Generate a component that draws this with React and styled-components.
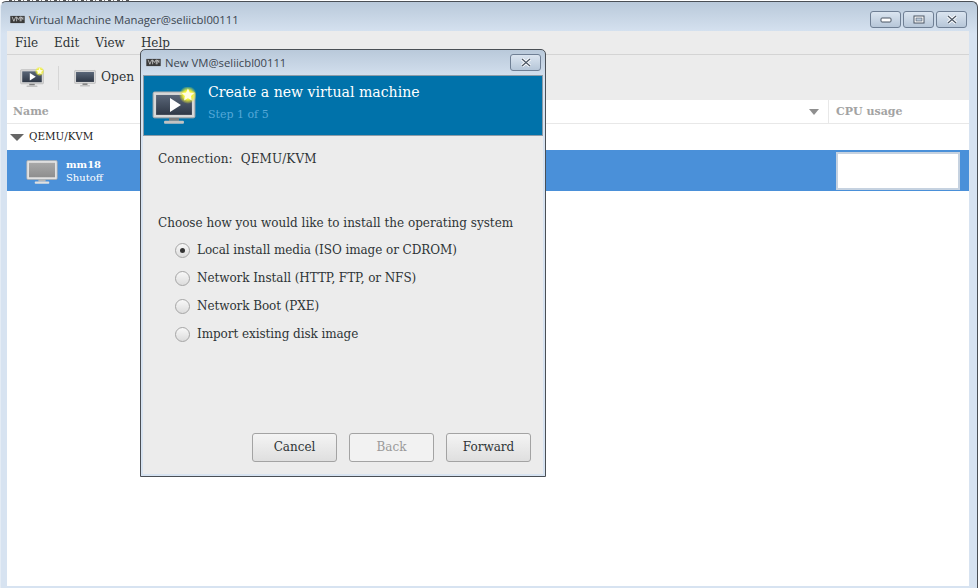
import React from "react";
import styled, { createGlobalStyle } from "styled-components";

const Global = createGlobalStyle`
  html, body { margin: 0; padding: 0; background: #fff; }
  body { width: 980px; height: 588px; overflow: hidden; font-family: "DejaVu Serif", serif; font-size: 12px; color: #2e3436; }
`;

const Desktop = styled.div`
  position: relative;
  width: 980px;
  height: 588px;
  padding: 1px 0 0 0;
  box-sizing: border-box;
  overflow: hidden;
`;

// bits of some other window peeking out above the frame
const Remnant = styled.div`
  position: absolute;
  left: 9px;
  top: 0;
  width: 120px;
  height: 1px;
  background: repeating-linear-gradient(90deg, #555 0 3px, transparent 3px 5px, #777 5px 6px, transparent 6px 9px);
`;

const Frame = styled.div`
  width: 978px;
  height: 587px;
  box-sizing: border-box;
  display: flex;
  flex-direction: column;
  border: 1px solid #4a4f55;
  border-left-color: #e4ecf5;
  border-bottom: 0;
  border-radius: 6px 6px 0 0;
  background: linear-gradient(#b9c9da 0, #d7e3f1 32px);
  padding: 0 8px 2px 6px;
`;

const TitleBar = styled.div`
  height: 29px;
  flex: none;
  box-sizing: border-box;
  display: flex;
  align-items: center;
  font-family: "Open Sans", sans-serif;
  font-size: 11.3px;
  color: #3c4650;
  gap: 4px;
  padding: 6px 0 0 3px;
`;

const TitleText = styled.span`
  flex: 1;
`;

const CaptionGroup = styled.div`
  display: flex;
  gap: 2px;
  margin-right: 2px;
`;

const CaptionBtn = styled.div`
  width: 31px;
  height: 17px;
  box-sizing: border-box;
  border: 1px solid #6f7f94;
  border-radius: 3px;
  background: linear-gradient(#dbe5f0, #b6c6d8);
  display: flex;
  align-items: center;
  justify-content: center;
`;

const Client = styled.div`
  flex: 1;
  display: flex;
  flex-direction: column;
  background: #fff;
`;

const MenuBar = styled.div`
  height: 23px;
  flex: none;
  display: flex;
  align-items: center;
  gap: 16px;
  padding-left: 8px;
  background: #ececec;
  border-bottom: 1px solid #d4d4d4;
  font-size: 12px;
  color: #2e3436;
`;

const Toolbar = styled.div`
  height: 45px;
  flex: none;
  display: flex;
  align-items: center;
  background: #ececec;
  padding-left: 13px;
`;

const ToolSep = styled.div`
  width: 1px;
  height: 24px;
  background: #d6d6d6;
  margin: 0 15px 0 14px;
`;

const ToolLabel = styled.span`
  margin: 0 0 2px 5px;
  font-size: 12.3px;
`;

const HeaderRow = styled.div`
  height: 23px;
  flex: none;
  display: flex;
  align-items: center;
  border-bottom: 1px solid #e8e8e8;
  font-weight: bold;
  color: #a3a3a3;
  font-size: 11px;
`;

const NameCol = styled.div`
  flex: 1;
  padding-left: 6px;
  display: flex;
  align-items: center;
  justify-content: space-between;
  padding-right: 9px;
`;

const CpuCol = styled.div`
  width: 141px;
  height: 100%;
  box-sizing: border-box;
  padding-left: 7px;
  display: flex;
  align-items: center;
  border-left: 1px solid #e8e8e8;
`;

const SortArrow = styled.div`
  width: 0;
  height: 0;
  border-left: 5px solid transparent;
  border-right: 5px solid transparent;
  border-top: 6px solid #8f8f8f;
`;

const GroupRow = styled.div`
  height: 26px;
  flex: none;
  display: flex;
  align-items: center;
  padding-left: 3px;
  gap: 5px;
  font-size: 10.3px;
  color: #222;
`;

const GroupName = styled.span`
  margin-bottom: 2px;
`;

const Expander = styled.div`
  width: 0;
  height: 0;
  border-left: 7px solid transparent;
  border-right: 7px solid transparent;
  border-top: 7px solid #666;
`;

const VmRow = styled.div`
  height: 41px;
  flex: none;
  display: flex;
  align-items: center;
  background: #4a90d9;
  color: #fff;
  padding-left: 19px;
`;

const VmText = styled.div`
  flex: 1;
  margin-left: 8px;
  display: flex;
  flex-direction: column;
  font-size: 10px;
  line-height: 13px;
`;

const VmName = styled.span`
  font-weight: bold;
`;

const CpuGraph = styled.div`
  width: 124px;
  height: 38px;
  box-sizing: border-box;
  margin-right: 9px;
  border: 2px solid #c6d2e0;
  background: #fff;
`;

const Dialog = styled.div`
  position: absolute;
  left: 140px;
  top: 49px;
  width: 406px;
  height: 428px;
  box-sizing: border-box;
  display: flex;
  flex-direction: column;
  border: 1px solid #4a4f55;
  border-radius: 5px 5px 0 0;
  background: linear-gradient(#b9c9da 0, #d7e3f1 30px);
  padding: 0 2px 2px 2px;
`;

const DialogTitle = styled.div`
  height: 25px;
  flex: none;
  display: flex;
  align-items: center;
  gap: 4px;
  padding: 0 2px 0 3px;
  font-family: "Open Sans", sans-serif;
  font-size: 11.3px;
  color: #3c4650;
`;

const DialogBody = styled.div`
  flex: 1;
  display: flex;
  flex-direction: column;
  background: #ececec;
`;

const Banner = styled.div`
  height: 61px;
  flex: none;
  box-sizing: border-box;
  display: flex;
  align-items: center;
  gap: 12px;
  padding-left: 8px;
  background: #0072aa;
  border: 1px solid #8d9ca8;
`;

const BannerText = styled.div`
  display: flex;
  flex-direction: column;
  gap: 8px;
  padding-bottom: 6px;
`;

const BannerTitle = styled.span`
  font-size: 14.1px;
  color: #fff;
`;

const BannerStep = styled.span`
  font-size: 11px;
  color: #55a8d8;
`;

const Content = styled.div`
  flex: 1;
  display: flex;
  flex-direction: column;
  padding: 14px 12px 12px 15px;
`;

const Connection = styled.div`
  height: 18px;
  line-height: 18px;
  letter-spacing: 0.13px;
`;

const Prompt = styled.div`
  margin-top: 46px;
  height: 18px;
  line-height: 18px;
`;

const Options = styled.div`
  display: flex;
  flex-direction: column;
  gap: 10px;
  margin-top: 9px;
  padding-left: 17px;
`;

const Option = styled.div`
  height: 18px;
  display: flex;
  align-items: center;
  gap: 7px;
  letter-spacing: -0.07px;
`;

const Radio = styled.div`
  width: 13px;
  height: 13px;
  border-radius: 50%;
  border: 1px solid #a5a5a5;
  background: linear-gradient(#f8f8f8, #dcdcdc);
  display: flex;
  align-items: center;
  justify-content: center;
  &::after {
    content: "";
    display: ${(p) => (p.$on ? "block" : "none")};
    width: 5px;
    height: 5px;
    border-radius: 50%;
    background: #333;
  }
`;

const Actions = styled.div`
  margin-top: auto;
  display: flex;
  justify-content: flex-end;
  gap: 12px;
`;

const Button = styled.div`
  width: 85px;
  height: 29px;
  box-sizing: border-box;
  padding-bottom: 2px;
  display: flex;
  align-items: center;
  justify-content: center;
  border: 1px solid #a3a3a3;
  border-radius: 3px;
  color: ${(p) => (p.$disabled ? "#9a9a9a" : "#2e3436")};
  background: ${(p) => (p.$disabled ? "#f2f2f2" : "linear-gradient(#f4f4f4, #dfdfdf)")};
`;

const AppIcon = () => (
  <svg width="15" height="9" viewBox="0 0 16 10">
    <path d="M0 1h16v8H0z" fill="#3a3a3a" />
    <path d="M2 2l2 5 2-5M7 7V2l2 3 2-3v5M12 7V2l2 3v-3" stroke="#ddd" strokeWidth="0.8" fill="none" />
  </svg>
);

const Monitor = ({ size = 24, star, play, off }) => (
  <svg width={size} height={size * 0.86} viewBox="0 0 44 38">
    <defs>
      <linearGradient id={off ? "scrOff" : "scrOn"} x1="0" y1="0" x2="0" y2="1">
        <stop offset="0" stopColor={off ? "#a8a8a8" : "#5a6678"} />
        <stop offset="1" stopColor={off ? "#8e8e8e" : "#2f3846"} />
      </linearGradient>
      <radialGradient id="glow">
        <stop offset="0.5" stopColor="#f2f230" />
        <stop offset="1" stopColor="#f2f230" stopOpacity="0" />
      </radialGradient>
    </defs>
    <rect x="1" y="5" width="42" height="26" rx="1.5" fill={off ? "#e4e4e4" : "#d8d8d8"} stroke="#a8a8a8" />
    <rect x="4" y="8" width="36" height="20" fill={`url(#${off ? "scrOff" : "scrOn"})`} />
    <rect x="17" y="31" width="10" height="3" fill={off ? "#b5b5b5" : "#7d7d7d"} />
    <rect x="12" y="34" width="20" height="3" rx="1" fill={off ? "#e0e0e0" : "#c2c2c2"} />
    {play && <path d="M18 11l11 7-11 7z" fill="#fff" />}
    {star && (
      <g>
        <circle cx="36" cy="8" r="9" fill="url(#glow)" />
        <path d="M36 1.5l1.9 4 4.4.6-3.2 3 .8 4.4-3.9-2.2-3.9 2.2.8-4.4-3.2-3 4.4-.6z" fill="#fffde0" />
      </g>
    )}
  </svg>
);

const CloseGlyph = () => (
  <svg width="12" height="9" viewBox="0 0 12 9">
    <path d="M2 1l8 7M10 1L2 8" stroke="#fff" strokeWidth="3" />
    <path d="M2 1l8 7M10 1L2 8" stroke="#4a5563" strokeWidth="1.2" />
  </svg>
);

const MinGlyph = () => (
  <svg width="12" height="6" viewBox="0 0 12 6">
    <rect x="1" y="1" width="10" height="4" rx="1" fill="#fff" stroke="#4a5563" />
  </svg>
);

const MaxGlyph = () => (
  <svg width="12" height="9" viewBox="0 0 12 9">
    <rect x="1" y="1" width="10" height="7" fill="#fff" stroke="#4a5563" />
    <rect x="3" y="3" width="6" height="3" fill="#b9c9da" stroke="#4a5563" strokeWidth="0.6" />
  </svg>
);

const options = [
  "Local install media (ISO image or CDROM)",
  "Network Install (HTTP, FTP, or NFS)",
  "Network Boot (PXE)",
  "Import existing disk image",
];

export default function App() {
  return (
    <Desktop>
      <Global />
      <Remnant />
      <Frame>
        <TitleBar>
          <AppIcon />
          <TitleText>Virtual Machine Manager@seliicbl00111</TitleText>
          <CaptionGroup>
            <CaptionBtn><MinGlyph /></CaptionBtn>
            <CaptionBtn><MaxGlyph /></CaptionBtn>
            <CaptionBtn><CloseGlyph /></CaptionBtn>
          </CaptionGroup>
        </TitleBar>
        <Client>
          <MenuBar>
            <span>File</span>
            <span>Edit</span>
            <span>View</span>
            <span>Help</span>
          </MenuBar>
          <Toolbar>
            <Monitor size={24} star play />
            <ToolSep />
            <Monitor size={22} />
            <ToolLabel>Open</ToolLabel>
          </Toolbar>
          <HeaderRow>
            <NameCol>
              <span>Name</span>
              <SortArrow />
            </NameCol>
            <CpuCol>CPU usage</CpuCol>
          </HeaderRow>
          <GroupRow>
            <Expander />
            <GroupName>QEMU/KVM</GroupName>
          </GroupRow>
          <VmRow>
            <Monitor size={32} off />
            <VmText>
              <VmName>mm18</VmName>
              <span>Shutoff</span>
            </VmText>
            <CpuGraph />
          </VmRow>
        </Client>
      </Frame>
      <Dialog>
        <DialogTitle>
          <AppIcon />
          <TitleText>New VM@seliicbl00111</TitleText>
          <CaptionBtn><CloseGlyph /></CaptionBtn>
        </DialogTitle>
        <DialogBody>
          <Banner>
            <Monitor size={44} star play />
            <BannerText>
              <BannerTitle>Create a new virtual machine</BannerTitle>
              <BannerStep>Step 1 of 5</BannerStep>
            </BannerText>
          </Banner>
          <Content>
            <Connection>Connection:&nbsp; QEMU/KVM</Connection>
            <Prompt>Choose how you would like to install the operating system</Prompt>
            <Options>
              {options.map((o, i) => (
                <Option key={o}>
                  <Radio $on={i === 0} />
                  <span>{o}</span>
                </Option>
              ))}
            </Options>
            <Actions>
              <Button>Cancel</Button>
              <Button $disabled>Back</Button>
              <Button>Forward</Button>
            </Actions>
          </Content>
        </DialogBody>
      </Dialog>
    </Desktop>
  );
}
